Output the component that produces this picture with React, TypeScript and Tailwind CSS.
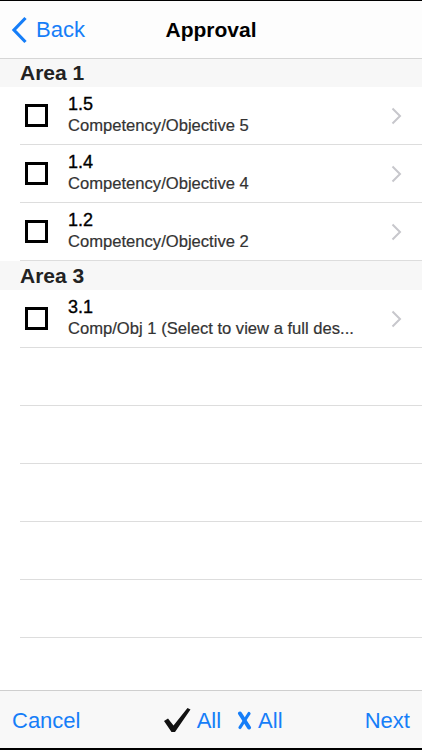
import React from "react";

type Item = { id: string; code: string; label: string };
type Section = { title: string; items: Item[] };

const sections: Section[] = [
  {
    title: "Area 1",
    items: [
      { id: "a", code: "1.5", label: "Competency/Objective 5" },
      { id: "b", code: "1.4", label: "Competency/Objective 4" },
      { id: "c", code: "1.2", label: "Competency/Objective 2" },
    ],
  },
  {
    title: "Area 3",
    items: [{ id: "d", code: "3.1", label: "Comp/Obj 1 (Select to view a full des..." }],
  },
];

const font = { fontFamily: '"Liberation Sans", Arial, sans-serif' };

function Chevron() {
  return (
    <svg width="11" height="18" viewBox="0 0 11 18" fill="none">
      <path d="M1.5 1.5 L9 9 L1.5 16.5" stroke="#c7c7cc" strokeWidth="2" />
    </svg>
  );
}

function Row({ item }: { item: Item }) {
  return (
    <div className="ml-[20px] flex h-[58px] items-center border-b border-[#dddddd] pr-[20px]">
      <div className="ml-[5px] h-[23px] w-[23px] shrink-0 border-[3.5px] border-black" />
      <div className="ml-[20px] min-w-0 flex-1 pb-[1px]">
        <div className="text-[18px] leading-[21px] text-black [-webkit-text-stroke:0.35px_black]">{item.code}</div>
        <div className="whitespace-nowrap text-[16.6px] leading-[22px] text-[#333333] [-webkit-text-stroke:0.2px_#333333]">
          {item.label}
        </div>
      </div>
      <Chevron />
    </div>
  );
}

export default function App() {
  return (
    <div className="flex h-[750px] w-[422px] flex-col overflow-hidden bg-white" style={font}>
      <div className="h-[1px] bg-black" />
      <div className="relative flex h-[58px] items-center border-b border-[#d6d6d6] bg-[#fdfdfd]">
        <div className="flex items-center pl-[11px] text-[#167ef8]">
          <svg width="17" height="28" viewBox="0 0 17 28" fill="none">
            <path d="M14.5 2 L3 14 L14.5 26" stroke="#167ef8" strokeWidth="3.2" />
          </svg>
          <span className="ml-[8px] text-[22px]">Back</span>
        </div>
        <div className="pointer-events-none absolute inset-x-0 text-center text-[21px] font-bold text-black">
          Approval
        </div>
      </div>

      <div className="flex-1 overflow-hidden">
        {sections.map((s, i) => (
          <div key={s.title}>
            <div
              className={`flex items-center bg-[#f7f7f7] pl-[20px] text-[21px] font-bold text-[#222222] ${
                i === 0 ? "h-[28px]" : "h-[29px]"
              }`}
            >
              {s.title}
            </div>
            {s.items.map((item) => (
              <Row key={item.id} item={item} />
            ))}
          </div>
        ))}
        {[0, 1, 2, 3, 4].map((n) => (
          <div key={n} className="ml-[20px] h-[58px] border-b border-[#dddddd]" />
        ))}
      </div>

      <div className="flex h-[58px] items-center justify-between border-t border-[#cfcfcf] bg-[#f8f8f8] px-[12px] pt-[1px] text-[22px] text-[#167ef8]">
        <span>Cancel</span>
        <div className="flex items-center">
          <svg width="28" height="26" viewBox="0 0 28 26">
            <path d="M1 14 L5 11.5 L10.5 18.5 L24.5 1 L27.5 2.5 L12 25 L8.5 25 Z" fill="#111111" />
          </svg>
          <span className="ml-[6px]">All</span>
          <svg className="ml-[16px]" width="15" height="19" viewBox="0 0 15 19">
            <path d="M3 2.5 L12 16.5" stroke="#167ef8" strokeWidth="4" strokeLinecap="round" />
            <path d="M12 2.5 L3 16.5" stroke="#167ef8" strokeWidth="3.2" strokeLinecap="round" />
          </svg>
          <span className="ml-[6px]">All</span>
        </div>
        <span>Next</span>
      </div>
      <div className="h-[2px] bg-black" />
    </div>
  );
}
